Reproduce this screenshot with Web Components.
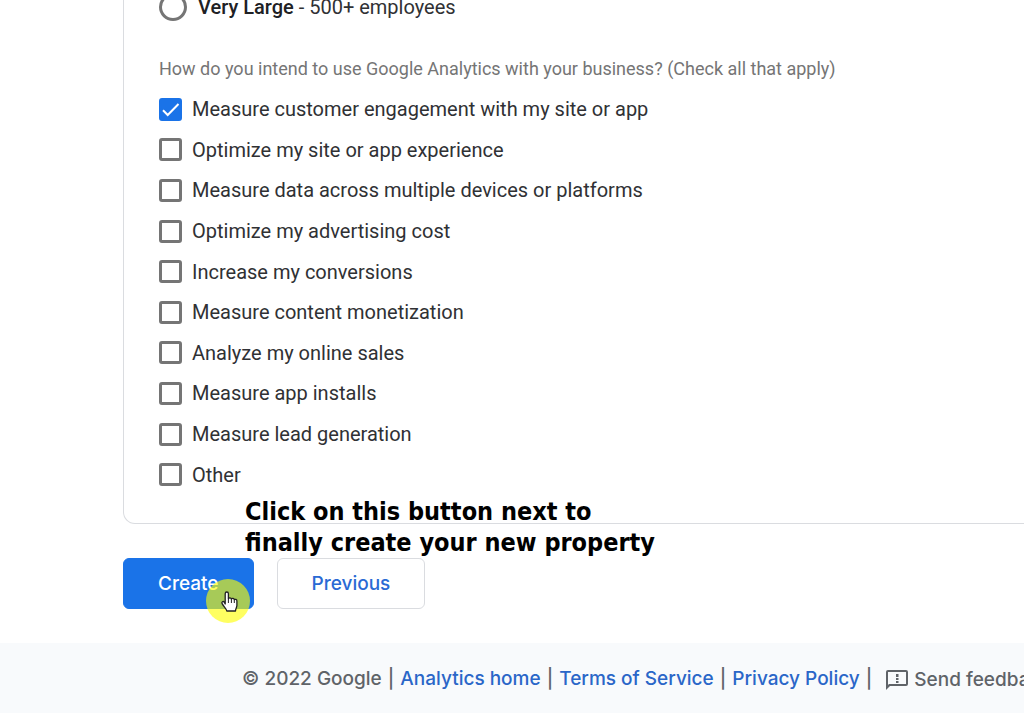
<!DOCTYPE html>
<html lang="en">
<head>
<meta charset="utf-8">
<title>Create property</title>
<style>
html, body { margin: 0; background: #fff; overflow-x: hidden; }
body { font-family: Roboto, "Liberation Sans", sans-serif; color: #303134; }
</style>
</head>
<body>
<setup-page></setup-page>
<script>
const define = (name, html, setup) => {
  const template = document.createElement('template');
  template.innerHTML = html;
  customElements.define(name, class extends HTMLElement {
    connectedCallback() {
      if (this.shadowRoot) return;
      const root = this.attachShadow({ mode: 'open' });
      root.append(template.content.cloneNode(true));
      if (setup) setup(this, root);
    }
  });
};

define('choice-radio', `
<style>
:host { display: block; }
label { display: flex; align-items: center; gap: 11px; font-size: 20px; line-height: 28px; white-space: nowrap; }
input { appearance: none; box-sizing: border-box; flex: none; width: 28px; height: 28px; margin: 0; border: 3px solid #757575; border-radius: 50%; background: #fff; }
input:checked { border-color: #1a73e8; box-shadow: inset 0 0 0 4px #fff; background: #1a73e8; }
</style>
<label><input type="radio" name="size"><span><slot></slot></span></label>`);

define('choice-check', `
<style>
:host { display: flex; align-items: center; }
label { display: flex; align-items: center; gap: 10px; font-size: 20px; line-height: 28px; white-space: nowrap; }
.box { display: grid; flex: none; }
.box > * { grid-area: 1 / 1; }
input { appearance: none; box-sizing: border-box; width: 23px; height: 23px; margin: 0; border: 3px solid #757575; border-radius: 3px; background: #fff; }
input:checked { border-color: #1a73e8; background: #1a73e8; }
svg { width: 23px; height: 23px; fill: none; stroke: #fff; stroke-width: 2; visibility: hidden; pointer-events: none; }
input:checked + svg { visibility: visible; }
</style>
<label><span class="box"><input type="checkbox"><svg viewBox="0 0 23 23" aria-hidden="true"><path d="M4 12.2 8.7 17 19.5 6"/></svg></span><span><slot></slot></span></label>`,
(host, root) => { root.querySelector('input').checked = host.hasAttribute('checked'); });

define('action-button', `
<style>
:host { display: block; }
button { box-sizing: border-box; height: 51px; padding: 0 34px; border: 1px solid #dadce0; border-radius: 6px; background: #fff; color: #2a6ad4; font: 500 19px/28px Inter, sans-serif; cursor: pointer; }
:host([primary]) button { border-color: #1a73e8; background: #1a73e8; color: #fff; }
</style>
<button type="button"><slot></slot></button>`);

define('survey-card', `
<style>
:host { display: block; box-sizing: border-box; margin-right: -16px; padding: 0 35px 28px; border: 1px solid #dadce0; border-top: 0; border-radius: 0 0 12px 12px; }
fieldset { margin: 0; padding: 0; border: 0; min-width: 0; }
legend { padding: 0; font-size: 18px; line-height: 24px; color: #757575; white-space: nowrap; }
.sizes { margin-bottom: 36px; }
.uses { display: grid; grid-auto-rows: 1fr; min-height: 406px; margin-top: 8px; }
b { font-weight: 500; color: #202124; }
</style>
<div class="sizes"><choice-radio><b>Very Large</b> - 500+ employees</choice-radio></div>
<fieldset>
<legend>How do you intend to use Google Analytics with your business? (Check all that apply)</legend>
<div class="uses">
<choice-check checked>Measure customer engagement with my site or app</choice-check>
<choice-check>Optimize my site or app experience</choice-check>
<choice-check>Measure data across multiple devices or platforms</choice-check>
<choice-check>Optimize my advertising cost</choice-check>
<choice-check>Increase my conversions</choice-check>
<choice-check>Measure content monetization</choice-check>
<choice-check>Analyze my online sales</choice-check>
<choice-check>Measure app installs</choice-check>
<choice-check>Measure lead generation</choice-check>
<choice-check>Other</choice-check>
</div>
</fieldset>`);

define('callout-note', `
<style>
:host { display: block; color: #000; font: 700 25px/31px "DejaVu Sans Condensed", "DejaVu Sans", sans-serif; white-space: nowrap; pointer-events: none; }
</style>
<slot></slot>`);

define('click-pointer', `
<style>
:host { display: block; width: 44px; height: 44px; pointer-events: none; }
svg { display: block; width: 44px; height: 44px; }
</style>
<svg viewBox="0 0 44 44" aria-hidden="true">
<circle cx="22" cy="22" r="22" fill="#ffff00" fill-opacity=".62"/>
<path d="M19.2 25V14.800c0-2.400 3.200-2.400 3.200 0v5c.3-1.300 2.800-1.200 3 .3.600-1.100 2.700-.8 2.900.6.800-.8 2.600-.3 2.600 1.300v4.600c0 1.600-1.400 3.400-1.400 5.400h-8.700c-.4-2.200-3-4.400-4.700-7.300-.9-1.700 1-3 2.200-1.500z" fill="#fff" stroke="#222" stroke-width="1.300" stroke-linejoin="round"/>
<path d="M22.400 19.800v4.200M25.400 20.200v3.800M28.300 20.800v3.200" fill="none" stroke="#222"/>
</svg>`);

define('page-footer', `
<style>
:host { display: block; background: #f8fafc; overflow: hidden; }
footer { display: flex; align-items: center; gap: 6px; padding: 21px 0 21px 242px; color: #5f6368; font: 500 19px/28px Inter, sans-serif; white-space: nowrap; }
a { color: #2a66c8; text-decoration: none; }
.feedback { display: flex; align-items: center; gap: 5px; margin-left: 7px; padding-top: 2px; color: inherit; }
svg { flex: none; width: 24px; height: 24px; }
</style>
<footer>
<span>© 2022 Google</span><span>|</span>
<a href="#home">Analytics home</a><span>|</span>
<a href="#terms">Terms of Service</a><span>|</span>
<a href="#privacy">Privacy Policy</a><span>|</span>
<a class="feedback" href="#feedback"><svg viewBox="0 0 24 24" fill="currentColor" aria-hidden="true"><path fill-rule="evenodd" d="M3 2h18a2 2 0 0 1 2 2v12a2 2 0 0 1-2 2H5l-4 4V4a2 2 0 0 1 2-2zm0 2v13l1-1h17V4z"/><path d="M11 6h2.500v3H11zM11 10h2.500v2H11zM11 13h2.500v2H11z"/></svg><span>Send feedback</span></a>
</footer>`);

define('setup-page', `
<style>
:host { display: flex; flex-direction: column; min-height: 100vh; overflow: hidden; }
main { margin-top: -7px; padding: 0 0 34px 123px; }
.actions { position: relative; display: flex; gap: 23px; margin-top: 34px; }
.create { position: relative; }
click-pointer { position: absolute; right: 4px; bottom: -14px; }
callout-note { position: absolute; left: 122px; bottom: 51px; }
page-footer { flex: 1; }
</style>
<main>
<survey-card></survey-card>
<div class="actions">
<div class="create"><action-button primary>Create</action-button><click-pointer></click-pointer></div>
<action-button>Previous</action-button>
<callout-note>Click on this button next to<br>finally create your new property</callout-note>
</div>
</main>
<page-footer></page-footer>`);
</script>
</body>
</html>
